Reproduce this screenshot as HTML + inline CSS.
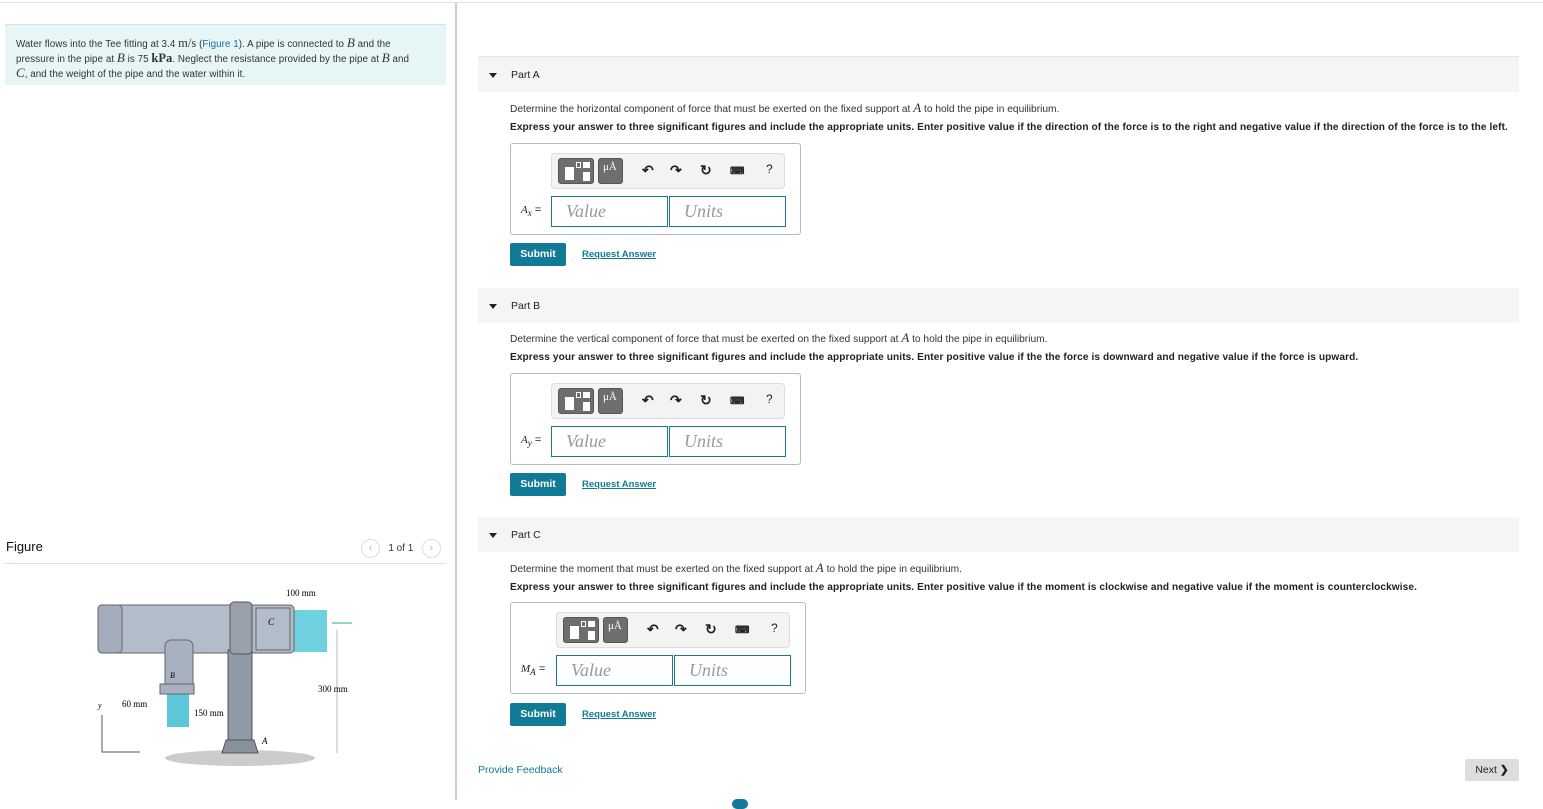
<!DOCTYPE html>
<html><head><meta charset="utf-8"><style>
*{box-sizing:border-box;margin:0;padding:0}
body{width:1543px;height:804px;overflow:hidden;background:#fff;font-family:"Liberation Sans",Arial,sans-serif;color:#222;position:relative}
.abs{position:absolute}
.topline{left:0;top:2px;width:1543px;height:1px;background:#e2e2e2}
.vline{left:455px;top:3px;width:2px;height:797px;background:#c8d0da}
.prob{left:5px;top:24px;width:441px;height:61px;background:#e6f5f5;border-top:1px solid #dde;font-size:9.8px;line-height:13px;padding:11px 10px 0 11px;color:#333;letter-spacing:0.05px}
.prob a{color:#1a6fa5}
.m{font-family:"Liberation Serif",serif;font-style:italic;font-size:13px}
.mb{font-family:"Liberation Serif",serif;font-weight:bold;font-size:12.5px}
.fig{left:6px;top:539px;font-size:13px;color:#111}
.pager{left:361px;top:539px;font-size:10px;color:#333}
.circ{display:inline-block;width:19px;height:19px;border:1px solid #ddd;border-radius:50%;text-align:center;line-height:17px;color:#bbb;font-size:11px;vertical-align:middle}
.figline{left:5px;top:563px;width:441px;height:1px;background:#dde}
.ph{left:478px;width:1041px;height:35px;background:#f5f5f5;font-size:10.5px;padding:12px 0 0 33px;color:#222}
.ph:before{content:"";position:absolute;left:11px;top:16px;border-left:4px solid transparent;border-right:4px solid transparent;border-top:5px solid #222}
.hr{left:478px;width:1041px;height:1px;background:#e5e5e5}
.q{left:510px;font-size:10.2px;color:#333}
.qb{left:510px;font-size:10.1px;font-weight:bold;color:#222;letter-spacing:0.1px}
.box{left:510px;width:291px;height:92px;border:1px solid #bbb;border-radius:3px}
.tb{position:absolute;left:40px;top:9px;width:234px;height:36px;background:#f3f3f3;border:1px solid #ddd;border-radius:4px}
.btn{position:absolute;top:4px;height:26px;background:#6e6e6e;border-radius:3px;border:1px solid #555}
.w{position:absolute;background:#fff}
.mu{position:absolute;left:4px;top:2px;color:#fff;font-family:"Liberation Serif",serif;font-size:11px}
.ic{position:absolute;top:8px;font-size:14px;color:#222;font-weight:bold}
.inp{position:absolute;top:52px;width:117px;height:31px;border:1px solid #1a7a94;font-family:"Liberation Serif",serif;font-style:italic;font-size:18px;color:#999;padding:4px 0 0 14px}
.lab{position:absolute;left:10px;top:60px;font-size:11px}
.sub{left:510px;width:56px;height:23px;background:#117b97;color:#fff;font-size:10.5px;font-weight:bold;text-align:center;line-height:23px;border-radius:2px}
.req{left:582px;font-size:9.5px;color:#117b97;text-decoration:underline;font-weight:bold}
</style></head><body>
<div class="abs topline"></div>
<div class="abs vline"></div>
<div class="abs prob">Water flows into the Tee fitting at 3.4 <span class="mb" style="font-weight:normal">m/s</span> (<a>Figure 1</a>). A pipe is connected to <span class="m">B</span> and the<br>pressure in the pipe at <span class="m">B</span> is 75 <span class="mb">kPa</span>. Neglect the resistance provided by the pipe at <span class="m">B</span> and<br><span class="m">C</span>, and the weight of the pipe and the water within it.</div>
<div class="abs fig">Figure</div>
<div class="abs pager"><span class="circ">&lsaquo;</span>&nbsp;&nbsp;&nbsp;1 of 1&nbsp;&nbsp;&nbsp;<span class="circ">&rsaquo;</span></div>
<div class="abs figline"></div>
<svg class="abs" style="left:80px;top:580px" width="300" height="190" viewBox="0 0 300 190">
<ellipse cx="160" cy="178" rx="75" ry="8" fill="#ccc"/>
<rect x="205" y="30" width="42" height="42" fill="#6fd0df"/>
<rect x="87" y="112" width="22" height="35" fill="#5cc7da"/>
<rect x="18" y="25" width="196" height="48" rx="4" fill="#b3bccb" stroke="#666"/>
<rect x="18" y="25" width="24" height="48" rx="4" fill="#a4adbd" stroke="#666"/>
<rect x="85" y="60" width="28" height="50" rx="6" fill="#a8b1c0" stroke="#666"/>
<rect x="80" y="104" width="34" height="10" fill="#a8b1c0" stroke="#666"/>
<rect x="148" y="70" width="24" height="103" fill="#9299a6" stroke="#555"/>
<polygon points="146,160 174,160 178,173 142,173" fill="#8a909c" stroke="#555"/>
<rect x="176" y="28" width="34" height="42" fill="#b3bccb" stroke="#666"/>
<rect x="150" y="22" width="22" height="52" rx="4" fill="#9aa1ad" stroke="#555"/>
<line x1="252" y1="43" x2="272" y2="43" stroke="#2a8"/>
<line x1="257" y1="50" x2="257" y2="173" stroke="#888" stroke-width=".6"/>
<text x="206" y="16" font-size="9" font-family="Liberation Serif">100 mm</text>
<text x="238" y="112" font-size="9" font-family="Liberation Serif">300 mm</text>
<text x="42" y="127" font-size="9" font-family="Liberation Serif">60 mm</text>
<text x="114" y="136" font-size="9" font-family="Liberation Serif">150 mm</text>
<text x="90" y="98" font-size="8" font-style="italic" font-family="Liberation Serif">B</text>
<text x="188" y="45" font-size="9" font-style="italic" font-family="Liberation Serif">C</text>
<text x="182" y="164" font-size="9" font-style="italic" font-family="Liberation Serif">A</text>
<text x="18" y="128" font-size="8" font-style="italic" font-family="Liberation Serif">y</text>
<polyline points="22,135 22,172 60,172" fill="none" stroke="#555"/>
</svg>

<div class="abs hr" style="top:56px"></div>
<div class="abs ph" style="top:57px">Part A</div>
<div class="abs q" style="top:100px">Determine the horizontal component of force that must be exerted on the fixed support at <span class="m">A</span> to hold the pipe in equilibrium.</div>
<div class="abs qb" style="top:122px">Express your answer to three significant figures and include the appropriate units. Enter positive value if the direction of the force is to the right and negative value if the direction of the force is to the left.</div>
<div class="abs box" style="top:143px"><div class="tb"><div class="btn" style="left:6px;width:36px"><div class="w" style="left:6px;top:8px;width:9px;height:13px"></div><div class="w" style="left:17px;top:3px;width:5px;height:6px;background:none;border:1px solid #fff"></div><div class="w" style="left:24px;top:3px;width:7px;height:6px"></div><div class="w" style="left:24px;top:13px;width:7px;height:9px"></div></div><div class="btn" style="left:46px;width:25px"><span class="mu">μÅ</span></div><span class="ic" style="left:90px">&#x21B6;</span><span class="ic" style="left:118px">&#x21B7;</span><span class="ic" style="left:148px">&#x21BB;</span><span class="ic" style="left:178px;font-size:10px;top:12px">&#x2328;</span><span class="ic" style="left:214px;font-size:12px;font-weight:normal">?</span></div><span class="lab"><i style="font-family:'Liberation Serif'">A<sub>x</sub></i> =</span><div class="inp" style="left:40px">Value</div><div class="inp" style="left:158px">Units</div></div>
<div class="abs sub" style="top:243px">Submit</div><div class="abs req" style="top:249px">Request Answer</div>

<div class="abs ph" style="top:288px">Part B</div>
<div class="abs q" style="top:330px">Determine the vertical component of force that must be exerted on the fixed support at <span class="m">A</span> to hold the pipe in equilibrium.</div>
<div class="abs qb" style="top:352px">Express your answer to three significant figures and include the appropriate units. Enter positive value if the the force is downward and negative value if the force is upward.</div>
<div class="abs box" style="top:373px"><div class="tb"><div class="btn" style="left:6px;width:36px"><div class="w" style="left:6px;top:8px;width:9px;height:13px"></div><div class="w" style="left:17px;top:3px;width:5px;height:6px;background:none;border:1px solid #fff"></div><div class="w" style="left:24px;top:3px;width:7px;height:6px"></div><div class="w" style="left:24px;top:13px;width:7px;height:9px"></div></div><div class="btn" style="left:46px;width:25px"><span class="mu">μÅ</span></div><span class="ic" style="left:90px">&#x21B6;</span><span class="ic" style="left:118px">&#x21B7;</span><span class="ic" style="left:148px">&#x21BB;</span><span class="ic" style="left:178px;font-size:10px;top:12px">&#x2328;</span><span class="ic" style="left:214px;font-size:12px;font-weight:normal">?</span></div><span class="lab"><i style="font-family:'Liberation Serif'">A<sub>y</sub></i> =</span><div class="inp" style="left:40px">Value</div><div class="inp" style="left:158px">Units</div></div>
<div class="abs sub" style="top:473px">Submit</div><div class="abs req" style="top:479px">Request Answer</div>

<div class="abs ph" style="top:517px">Part C</div>
<div class="abs q" style="top:560px">Determine the moment that must be exerted on the fixed support at <span class="m">A</span> to hold the pipe in equilibrium.</div>
<div class="abs qb" style="top:582px">Express your answer to three significant figures and include the appropriate units. Enter positive value if the moment is clockwise and negative value if the moment is counterclockwise.</div>
<div class="abs box" style="top:602px;width:296px"><div class="tb" style="left:45px"><div class="btn" style="left:6px;width:36px"><div class="w" style="left:6px;top:8px;width:9px;height:13px"></div><div class="w" style="left:17px;top:3px;width:5px;height:6px;background:none;border:1px solid #fff"></div><div class="w" style="left:24px;top:3px;width:7px;height:6px"></div><div class="w" style="left:24px;top:13px;width:7px;height:9px"></div></div><div class="btn" style="left:46px;width:25px"><span class="mu">μÅ</span></div><span class="ic" style="left:90px">&#x21B6;</span><span class="ic" style="left:118px">&#x21B7;</span><span class="ic" style="left:148px">&#x21BB;</span><span class="ic" style="left:178px;font-size:10px;top:12px">&#x2328;</span><span class="ic" style="left:214px;font-size:12px;font-weight:normal">?</span></div><span class="lab"><i style="font-family:'Liberation Serif'">M<sub>A</sub></i> =</span><div class="inp" style="left:45px">Value</div><div class="inp" style="left:163px">Units</div></div>
<div class="abs sub" style="top:703px">Submit</div><div class="abs req" style="top:709px">Request Answer</div>

<div class="abs" style="left:478px;top:764px;font-size:10.5px;color:#117b97">Provide Feedback</div>
<div class="abs" style="left:1465px;top:759px;width:54px;height:22px;background:#ddd;border-radius:2px;font-size:10.5px;line-height:22px;text-align:center;color:#222">Next <b>&#x276F;</b></div>
<div class="abs" style="left:732px;top:799px;width:16px;height:10px;border-radius:8px;background:#117b97"></div>
</body></html>
